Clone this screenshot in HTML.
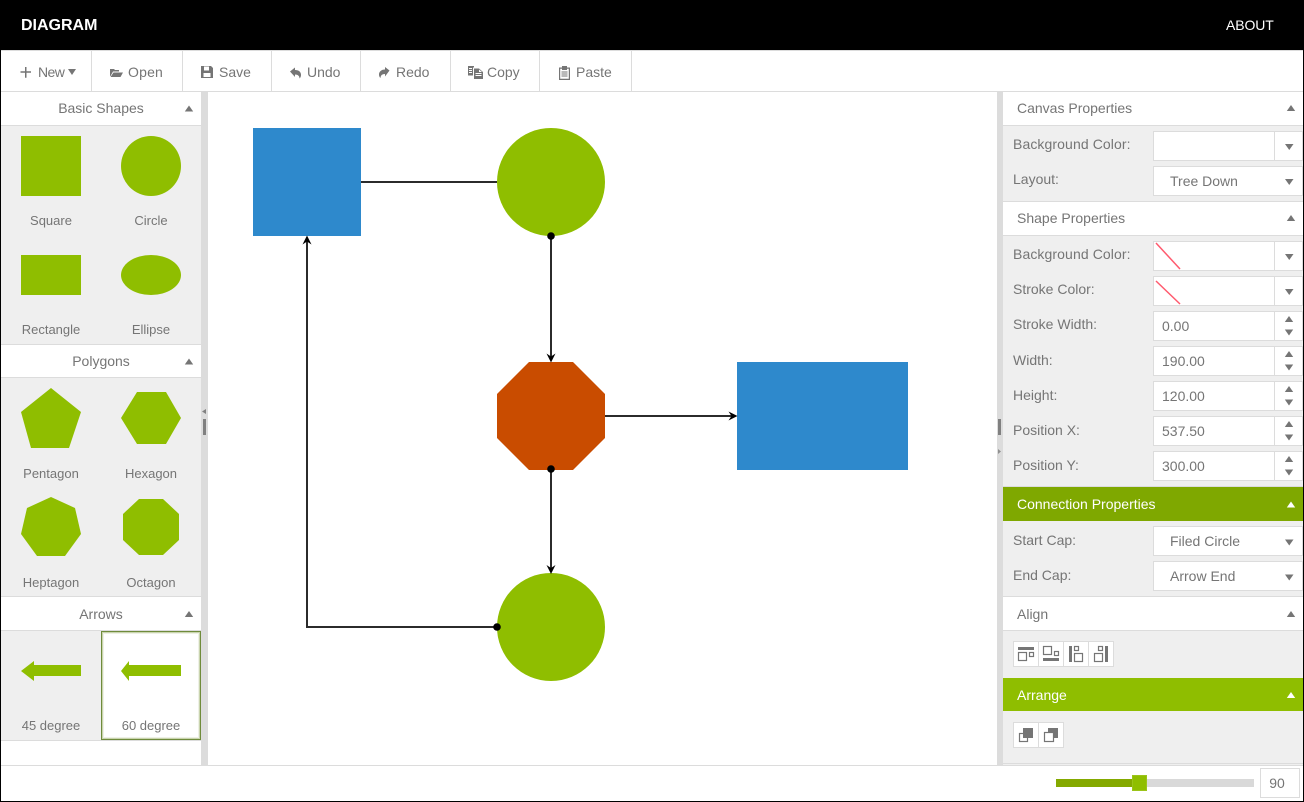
<!DOCTYPE html>
<html><head><meta charset="utf-8"><title>Diagram</title>
<style>
html,body{margin:0;padding:0;background:#fff}
body{position:relative;width:1304px;height:802px;overflow:hidden;font-family:"Liberation Sans",Arial,sans-serif;color:#757575}
svg{position:absolute;left:0;top:0}
.t{position:absolute;white-space:nowrap;font-size:14px;line-height:20px}
.c{text-align:center}
.s{font-size:13px;text-align:center;width:100px}
.w{color:#fff}
</style></head><body>
<svg width="1304" height="802" viewBox="0 0 1304 802" shape-rendering="auto">
<!-- frame -->
<rect x="0" y="0" width="1304" height="50" fill="#000"/>
<!-- toolbar -->
<g fill="#dcdcdc">
<rect x="1" y="91" width="1302" height="1"/>
<rect x="91" y="51" width="1" height="40"/><rect x="182" y="51" width="1" height="40"/><rect x="271" y="51" width="1" height="40"/><rect x="360" y="51" width="1" height="40"/><rect x="450" y="51" width="1" height="40"/><rect x="539" y="51" width="1" height="40"/><rect x="631" y="51" width="1" height="40"/>
</g>
<!-- left panel -->
<rect x="1" y="126" width="200" height="218" fill="#efefef"/>
<rect x="1" y="378" width="200" height="218" fill="#efefef"/>
<rect x="1" y="631" width="100" height="109" fill="#efefef"/>
<g fill="#dcdcdc">
<rect x="1" y="125" width="200" height="1"/><rect x="1" y="344" width="200" height="1"/><rect x="1" y="377" width="200" height="1"/><rect x="1" y="596" width="200" height="1"/><rect x="1" y="630" width="200" height="1"/><rect x="1" y="740" width="200" height="1"/>
</g>
<!-- splitters -->
<rect x="201" y="92" width="7" height="673" fill="#dcdcdc"/>
<rect x="997" y="92" width="6" height="673" fill="#dcdcdc"/>
<rect x="203" y="419" width="3" height="16" fill="#808080"/>
<path d="M206 409v5l-4-2.500z" fill="#808080"/>
<rect x="998" y="419" width="3" height="16" fill="#808080"/>
<path d="M998 449v5l3-2.500z" fill="#909090"/>
<!-- left shapes -->
<g fill="#8fbe00">
<rect x="21" y="136" width="60" height="60"/>
<circle cx="151" cy="166" r="30"/>
<rect x="21" y="255" width="60" height="40"/>
<ellipse cx="151" cy="275" rx="30" ry="20"/>
<polygon points="51,388 81,412 69,448 31,448 21,412"/>
<polygon points="121,418 137,392 166,392 181,418 166,444 137,444"/>
<polygon points="51,497 75,508 81,534 65,556 37,556 21,534 27,508"/>
<polygon points="139,499 163,499 179,514 179,540 163,555 139,555 123,540 123,514"/>
<polygon points="21,671 34,661 34,665 81,665 81,676 34,676 34,681"/>
</g>
<rect x="101.500" y="631.500" width="99" height="108" fill="#fff" stroke="#6f8b3c" stroke-width="1"/>
<rect x="102.500" y="632.500" width="97" height="106" fill="#fff" stroke="#c9d4ae" stroke-width="1"/>
<rect x="103.500" y="633.500" width="95" height="104" fill="#fff" stroke="#eef1e6" stroke-width="1"/>
<polygon points="121,671 129,661 129,665 181,665 181,676 129,676 129,681" fill="#8fbe00"/>
<!-- canvas -->
<g stroke="#2b2b2b" stroke-width="2" fill="none">
<path d="M361 182H497"/>
<path d="M551 236V358"/>
<path d="M605 416H733"/>
<path d="M551 469V569"/>
<path d="M497 627H307V240"/>
</g>
<rect x="253" y="128" width="108" height="108" fill="#2e89cc"/>
<circle cx="551" cy="182" r="54" fill="#8fbe00"/>
<polygon points="529,362 573,362 605,394 605,438 573,470 529,470 497,438 497,394" fill="#c94c00"/>
<rect x="737" y="362" width="171" height="108" fill="#2e89cc"/>
<circle cx="551" cy="627" r="54" fill="#8fbe00"/>
<g fill="#000">
<circle cx="551" cy="236" r="3.800"/><circle cx="551" cy="469" r="3.800"/><circle cx="497" cy="627" r="3.800"/>
<path d="M551 362.500l-4.500-9 4.500 3 4.500-3z"/>
<path d="M551 574l-4.500-9 4.500 3 4.500-3z"/>
<path d="M737.500 416l-9-4.500 3 4.500-3 4.500z"/>
<path d="M307 235.500l-4.500 9 4.500-3 4.500 3z"/>
</g>
<!-- right panel -->
<rect x="1003" y="126" width="300" height="76" fill="#efefef"/>
<rect x="1003" y="236" width="300" height="251" fill="#efefef"/>
<rect x="1003" y="521" width="300" height="76" fill="#efefef"/>
<rect x="1003" y="631" width="300" height="47" fill="#efefef"/>
<rect x="1003" y="711" width="300" height="54" fill="#efefef"/>
<g fill="#dcdcdc">
<rect x="1003" y="125" width="300" height="1"/><rect x="1003" y="201" width="300" height="1"/><rect x="1003" y="235" width="300" height="1"/><rect x="1003" y="486" width="300" height="1"/><rect x="1003" y="596" width="300" height="1"/><rect x="1003" y="630" width="300" height="1"/><rect x="1003" y="763" width="300" height="1"/>
</g>
<rect x="1003" y="487" width="300" height="34" fill="#7fa800"/>
<rect x="1003" y="678" width="300" height="33" fill="#8fbe00"/>
<!-- inputs -->
<g fill="#fff" stroke="#dcdcdc">
<rect x="1153.500" y="131.500" width="149" height="29"/>
<rect x="1153.500" y="166.500" width="149" height="29"/>
<rect x="1153.500" y="241.500" width="149" height="29"/>
<rect x="1153.500" y="276.500" width="149" height="29"/>
<rect x="1153.500" y="311.500" width="149" height="29"/>
<rect x="1153.500" y="346.500" width="149" height="29"/>
<rect x="1153.500" y="381.500" width="149" height="29"/>
<rect x="1153.500" y="416.500" width="149" height="29"/>
<rect x="1153.500" y="451.500" width="149" height="29"/>
<rect x="1153.500" y="526.500" width="149" height="29"/>
<rect x="1153.500" y="561.500" width="149" height="29"/>
</g>
<g stroke="#dcdcdc" fill="none">
<path d="M1274.500 132v29M1274.500 242v29M1274.500 277v29M1274.500 312v29M1274.500 347v29M1274.500 382v29M1274.500 417v29M1274.500 452v29"/>
</g>
<g stroke="#ff5a6e" stroke-width="1.500" fill="none">
<path d="M1156 243L1180 269"/>
<path d="M1156 281L1180 304"/>
</g>
<!-- header carets up -->
<g fill="#757575">
<path d="M184.800 111.500l4.200-6 4.200 6z"/><path d="M184.800 364.500l4.200-6 4.200 6z"/><path d="M184.800 617l4.200-6 4.200 6z"/>
<path d="M1286.800 111l4.200-6 4.200 6z"/><path d="M1286.800 221l4.200-6 4.200 6z"/><path d="M1286.800 617l4.200-6 4.200 6z"/>
<!-- toolbar caret -->
<path d="M68 69h8l-4 6z"/>
<!-- dropdown carets -->
<path d="M1285 144h8.500l-4.250 6z"/><path d="M1285 179h8.500l-4.250 6z"/><path d="M1285 254h8.500l-4.250 6z"/><path d="M1285 289h8.500l-4.250 6z"/><path d="M1285 539.500h8.500l-4.250 6z"/><path d="M1285 574.500h8.500l-4.250 6z"/>
<!-- spinners -->
<path d="M1284.800 322l4.200-6 4.200 6z"/><path d="M1284.800 329.500h8.400l-4.200 6z"/>
<path d="M1284.800 357l4.200-6 4.200 6z"/><path d="M1284.800 364.500h8.400l-4.200 6z"/>
<path d="M1284.800 392l4.200-6 4.200 6z"/><path d="M1284.800 399.500h8.400l-4.200 6z"/>
<path d="M1284.800 427l4.200-6 4.200 6z"/><path d="M1284.800 434.500h8.400l-4.200 6z"/>
<path d="M1284.800 462l4.200-6 4.200 6z"/><path d="M1284.800 469.500h8.400l-4.200 6z"/>
</g>
<g fill="#fff"><path d="M1286.800 507.500l4.200-6 4.200 6z"/><path d="M1286.800 698l4.200-6 4.200 6z"/></g>
<!-- toolbar icons -->
<g fill="#757575">
<path d="M25 67h1.500v4.300h4.500v1.500h-4.500v5h-1.500v-5h-4.500v-1.500h4.500z"/>
<path d="M110 69h4l1 1h4v1.500h-6l-2.500 4.500-.5 0zM113.500 72.500h9.500l-2.500 4.500h-10z"/>
<path d="M201 66h10l2 2v10h-12zM204 66.500v4h5v-4zM203.500 73v4h7v-4z" fill-rule="evenodd"/>
<path d="M290 71.500l5-4v2.500c4 0 6 2 6 5 0 1.500-.5 2.500-1.500 3.500 0-2.500-1.500-4-4.500-4v2.500z"/>
<path d="M389.500 70.500l-4.500-3.500v2.500c-3.500 0-6 2-6 5 0 1.500 .5 2.800 1.500 3.500 0-2.500 1.500-4 4.500-4v2.500z"/>
<path d="M468 66h6v1.500h-1v8h-5zM469 68v1h3v-1zM469 70v1h3v-1zM469 72v1h3v-1z" fill-rule="evenodd"/>
<path d="M474 68.500h5l4 3.500v7h-9zM475.500 73v1h6v-1zM475.500 75v1h6v-1zM479 69.500v2.500h3z" fill-rule="evenodd"/>
<path d="M562 66h5v1.500h3v12.500h-11v-12.500h3zM560.200 68.700v10.100h8.600v-10.100h-1.800v1.300h-5v-1.300zM561.500 71.500h6v1h-6zM561.500 73.500h6v1h-6zM561.500 75.500h6v1h-6z" fill-rule="evenodd"/>
</g>
<!-- align buttons -->
<g fill="#fff" stroke="#dcdcdc">
<rect x="1013.500" y="641.500" width="25" height="25"/><rect x="1038.500" y="641.500" width="25" height="25"/><rect x="1063.500" y="641.500" width="25" height="25"/><rect x="1088.500" y="641.500" width="25" height="25"/>
<rect x="1013.500" y="722.500" width="25" height="25"/><rect x="1038.500" y="722.500" width="25" height="25"/>
</g>
<g fill="#757575">
<rect x="1018" y="647" width="16" height="3"/>
<rect x="1043" y="658" width="16" height="3"/>
<rect x="1069" y="646" width="3" height="16"/>
<rect x="1105" y="646" width="3" height="16"/>
</g>
<g fill="none" stroke="#757575" stroke-width="1.200">
<rect x="1018.500" y="652.500" width="8" height="8"/><rect x="1029.500" y="652.500" width="4" height="4"/>
<rect x="1043.500" y="646.500" width="8" height="8"/><rect x="1054.500" y="651.500" width="4" height="4"/>
<rect x="1074.500" y="646.500" width="4" height="4"/><rect x="1074.500" y="653.500" width="8" height="8"/>
<rect x="1098.500" y="646.500" width="4" height="4"/><rect x="1094.500" y="653.500" width="8" height="8"/>
</g>
<!-- arrange buttons -->
<rect x="1019.500" y="733.500" width="8" height="8" fill="#fff" stroke="#757575" stroke-width="1.200"/>
<rect x="1023" y="728" width="10" height="10" fill="#757575"/>
<rect x="1048" y="728" width="10" height="10" fill="#757575"/>
<rect x="1044.500" y="732.500" width="9" height="9" fill="#fff" stroke="#757575" stroke-width="1.200"/>
<!-- bottom bar -->
<rect x="0" y="765" width="1304" height="1" fill="#dcdcdc"/>
<rect x="1056" y="779" width="198" height="8" fill="#d9d9d9"/>
<rect x="1056" y="779" width="78" height="8" fill="#84a900"/>
<rect x="1132" y="775" width="15" height="16" fill="#8fbe00"/>
<rect x="1132.500" y="775.500" width="14" height="15" fill="none" stroke="#9bc41a"/>
<rect x="1260.500" y="768.500" width="39" height="29" fill="#fff" stroke="#dcdcdc"/>
<!-- outer frame -->
<rect x="0" y="50" width="1" height="752" fill="#000"/>
<rect x="1303" y="50" width="1" height="752" fill="#000"/>
<rect x="0" y="801" width="1304" height="1" fill="#000"/>
<rect x="1" y="50" width="1302" height="1" fill="#dcdcdc"/>
</svg>

<div class="t w" style="left:21px;top:16px;font-size:16px;font-weight:bold">DIAGRAM</div>
<div class="t w" style="left:1226px;top:15px;letter-spacing:-.1px">ABOUT</div>

<div class="t" style="left:38px;top:62px;letter-spacing:-.6px">New</div>
<div class="t" style="left:128px;top:62px;letter-spacing:.2px">Open</div>
<div class="t" style="left:219px;top:62px">Save</div>
<div class="t" style="left:307px;top:62px">Undo</div>
<div class="t" style="left:396px;top:62px">Redo</div>
<div class="t" style="left:487px;top:62px">Copy</div>
<div class="t" style="left:576px;top:62px">Paste</div>

<div class="t c" style="left:1px;width:200px;top:98px">Basic Shapes</div>
<div class="t c" style="left:1px;width:200px;top:351px">Polygons</div>
<div class="t c" style="left:1px;width:200px;top:604px">Arrows</div>

<div class="t s" style="left:1px;top:211px">Square</div>
<div class="t s" style="left:101px;top:211px">Circle</div>
<div class="t s" style="left:1px;top:320px">Rectangle</div>
<div class="t s" style="left:101px;top:320px">Ellipse</div>
<div class="t s" style="left:1px;top:464px">Pentagon</div>
<div class="t s" style="left:101px;top:464px">Hexagon</div>
<div class="t s" style="left:1px;top:573px">Heptagon</div>
<div class="t s" style="left:101px;top:573px">Octagon</div>
<div class="t s" style="left:1px;top:716px">45 degree</div>
<div class="t s" style="left:101px;top:716px">60 degree</div>

<div class="t" style="left:1017px;top:98px">Canvas Properties</div>
<div class="t" style="left:1013px;top:134px;letter-spacing:.1px">Background Color:</div>
<div class="t" style="left:1013px;top:169px">Layout:</div>
<div class="t" style="left:1170px;top:171px">Tree Down</div>
<div class="t" style="left:1017px;top:208px">Shape Properties</div>
<div class="t" style="left:1013px;top:244px;letter-spacing:.1px">Background Color:</div>
<div class="t" style="left:1013px;top:279px">Stroke Color:</div>
<div class="t" style="left:1013px;top:314px">Stroke Width:</div>
<div class="t" style="left:1013px;top:350px">Width:</div>
<div class="t" style="left:1013px;top:385px">Height:</div>
<div class="t" style="left:1013px;top:420px">Position X:</div>
<div class="t" style="left:1013px;top:455px">Position Y:</div>
<div class="t" style="left:1162px;top:316px">0.00</div>
<div class="t" style="left:1162px;top:351px">190.00</div>
<div class="t" style="left:1162px;top:386px">120.00</div>
<div class="t" style="left:1162px;top:421px">537.50</div>
<div class="t" style="left:1162px;top:456px">300.00</div>
<div class="t w" style="left:1017px;top:494px">Connection Properties</div>
<div class="t" style="left:1013px;top:530px">Start Cap:</div>
<div class="t" style="left:1013px;top:565px">End Cap:</div>
<div class="t" style="left:1170px;top:531px">Filed Circle</div>
<div class="t" style="left:1170px;top:566px">Arrow End</div>
<div class="t" style="left:1017px;top:604px">Align</div>
<div class="t w" style="left:1017px;top:685px">Arrange</div>
<div class="t c" style="left:1257px;width:40px;top:773px">90</div>
</body></html>
